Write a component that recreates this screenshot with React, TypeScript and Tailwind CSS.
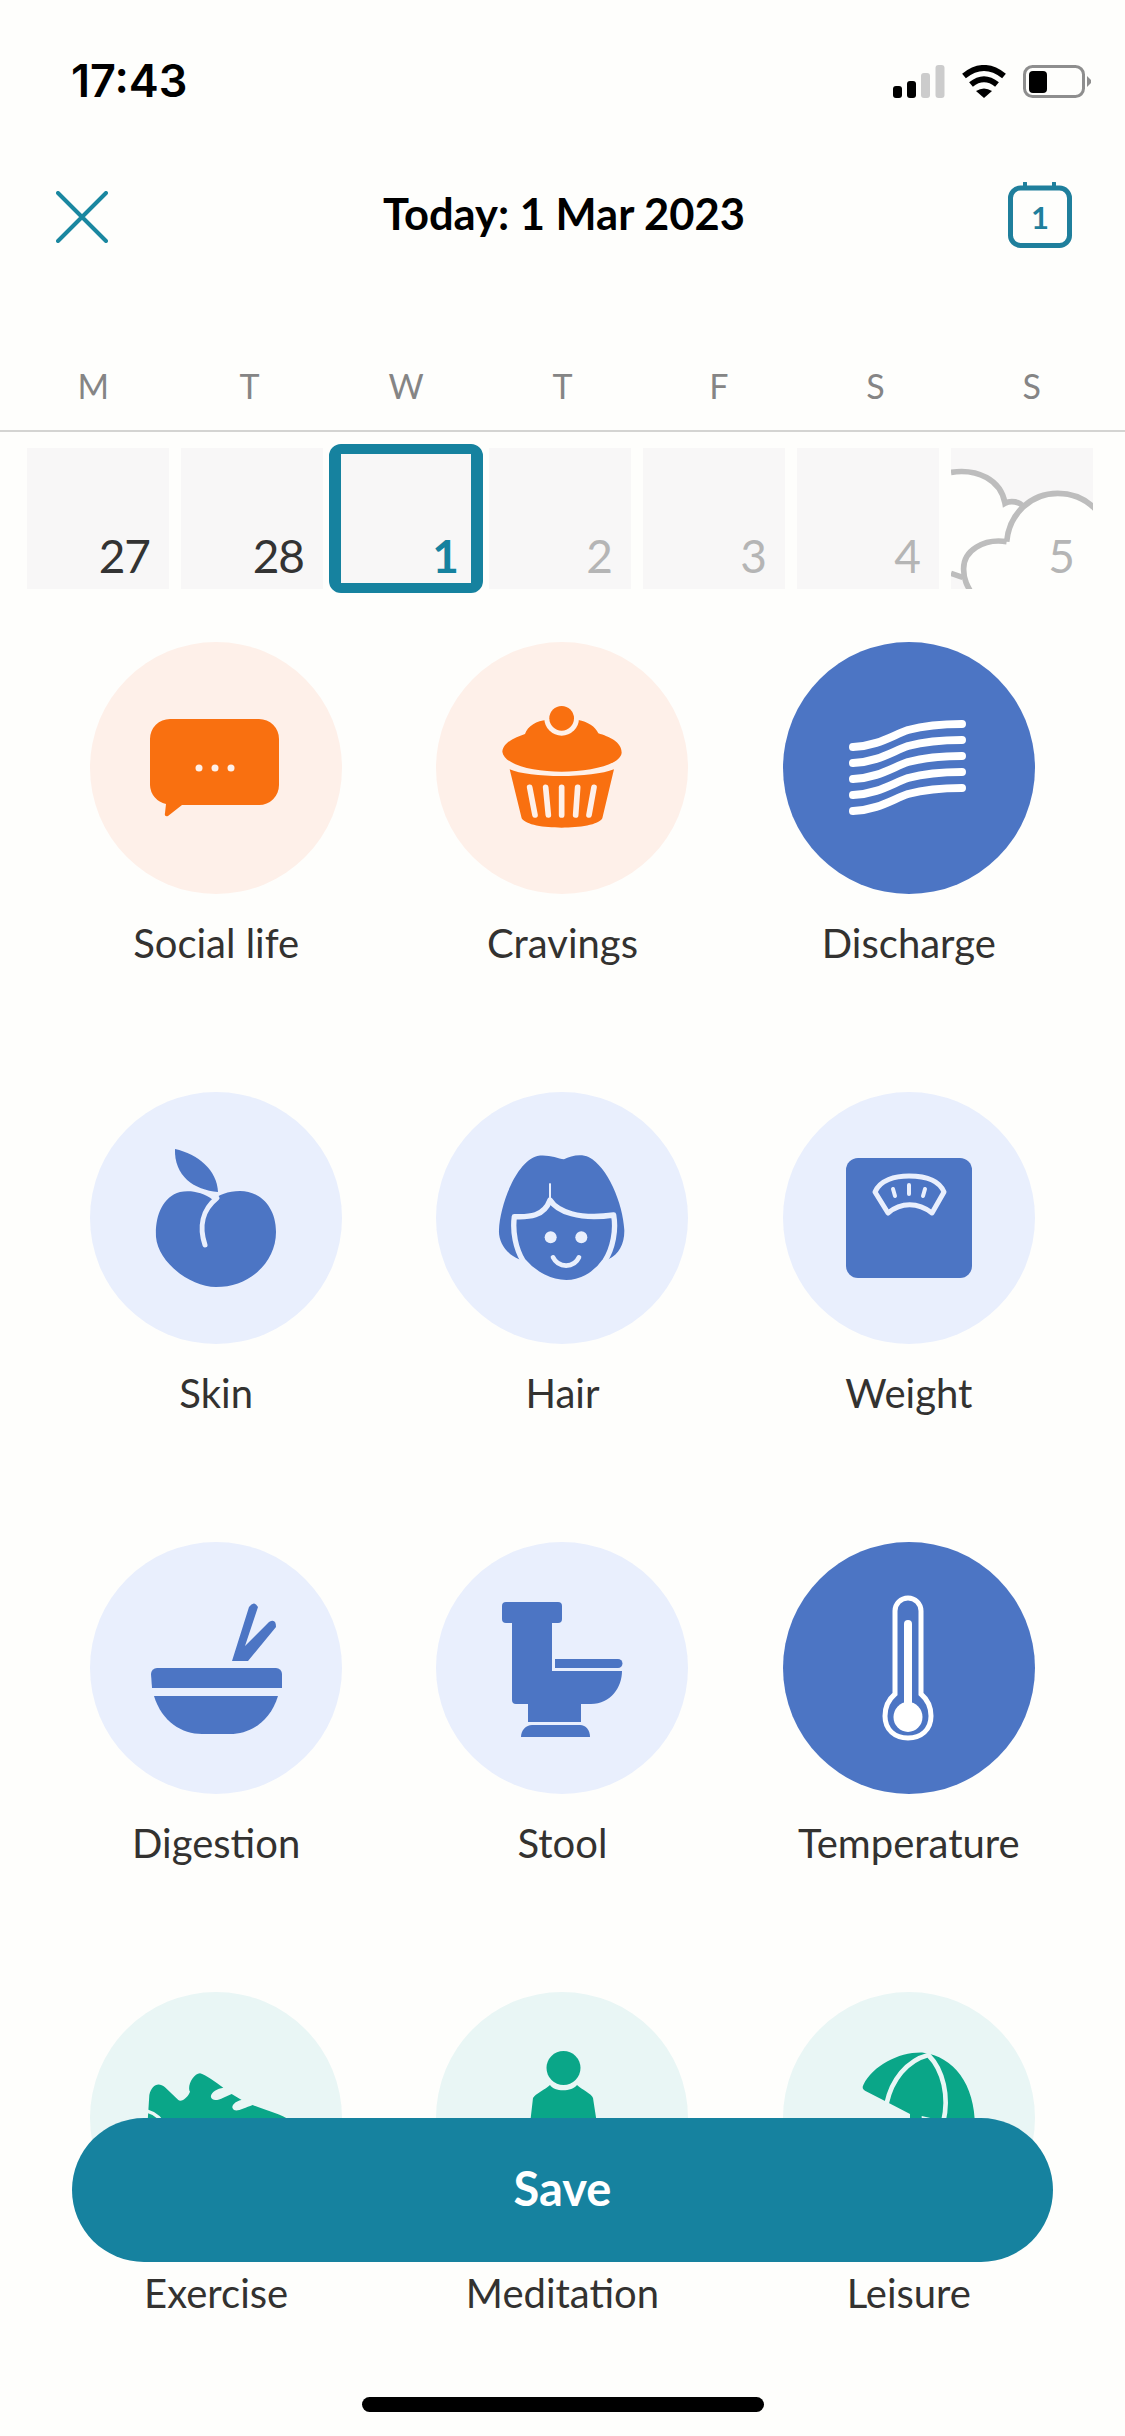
import type { ReactNode } from "react";

const ORANGE = "#f97010";
const PEACH = "#fef0e9";
const BLUE = "#4c75c4";
const SKY = "#e9effd";
const GREEN = "#0aa688";
const MINT = "#e9f6f5";

function Art({ children }: { children: ReactNode }) {
  return (
    <svg width="252" height="252" viewBox="0 0 252 252" className="block">
      {children}
    </svg>
  );
}

function SocialIcon() {
  return (
    <Art>
      <path d="M80 77h89a20 20 0 0 1 20 20v46a20 20 0 0 1-20 20H92l-14 11q-4 1-3-3l1-9a20 20 0 0 1-16-19V97a20 20 0 0 1 20-20z" fill={ORANGE} />
      <circle cx="109" cy="126" r="3.500" fill={PEACH} />
      <circle cx="125" cy="126" r="3.500" fill={PEACH} />
      <circle cx="141" cy="126" r="3.500" fill={PEACH} />
    </Art>
  );
}

function CupcakeIcon() {
  return (
    <Art>
      <g transform="translate(53 48) scale(0.3333)">
        <path d="M40 185C42 155 85 140 108 132C115 108 145 92 172 90L268 90C295 95 320 110 328 130C360 140 398 155 398 188C395 225 300 245 218 245C135 245 45 225 40 185Z" fill={ORANGE} />
        <path d="M62 238C120 265 310 265 375 238L340 385C330 405 270 413 218 413C165 413 110 405 98 385Z" fill={ORANGE} />
        <circle cx="218" cy="85" r="52" fill={PEACH} />
        <circle cx="218" cy="85" r="37" fill={ORANGE} />
        <g stroke={PEACH} strokeWidth="17" strokeLinecap="round">
          <path d="M122 292L138 375" />
          <path d="M170 292L178 375" />
          <path d="M218 292L218 375" />
          <path d="M266 292L260 375" />
          <path d="M315 292L300 375" />
        </g>
      </g>
    </Art>
  );
}

function DischargeIcon() {
  return (
    <Art>
      <g fill="none" stroke="#fff" strokeWidth="8" strokeLinecap="round">
        {[0, 16, 32, 48, 64].map((y) => (
          <path key={y} d={`M70 ${105 + y}C95 ${104 + y} 110 ${93 + y} 125 ${88 + y}C140 ${84 + y} 160 ${82 + y} 179 ${82 + y}`} />
        ))}
      </g>
    </Art>
  );
}

function SkinIcon() {
  return (
    <Art>
      <path d="M85 57C108 62 127 78 128 100C104 98 84 84 85 57Z" fill={BLUE} />
      <path d="M123 108C113 100 100 98 90 100C72 105 65 125 66 145C68 170 100 195 126 195C160 195 186 170 186 140C186 115 170 99 150 99C138 99 128 103 123 108Z" fill={BLUE} />
      <path d="M127 106C112 118 109 135 115 153" fill="none" stroke={SKY} strokeWidth="5" strokeLinecap="round" />
    </Art>
  );
}

function HairIcon() {
  return (
    <Art>
      <g transform="translate(43 28) scale(0.3333)">
        <path d="M60 330C62 260 110 125 175 108C205 102 235 115 255 118C275 108 305 100 330 112C385 140 432 250 436 330C437 370 420 405 388 418L120 418C80 400 58 365 60 330Z" fill={BLUE} />
        <path d="M106 290C150 292 195 290 213 240C235 275 300 300 404 285C412 330 402 385 378 422C345 470 300 488 262 488C215 488 165 462 132 422C110 385 100 335 106 290Z" fill={BLUE} stroke={SKY} strokeWidth="16" strokeLinejoin="round" />
        <path d="M213 190L213 240" stroke={SKY} strokeWidth="6" />
        <circle cx="215" cy="352" r="18" fill={SKY} />
        <circle cx="307" cy="352" r="18" fill={SKY} />
        <path d="M222 412C238 445 285 445 300 412" fill="none" stroke={SKY} strokeWidth="14" strokeLinecap="round" />
      </g>
    </Art>
  );
}

function WeightIcon() {
  return (
    <Art>
      <rect x="63" y="66" width="126" height="120" rx="12" fill={BLUE} />
      <path d="M92 100C97 88 112 84 126 84C141 84 156 88 161 100L149 121C135 110 118 110 105 121Z" fill="none" stroke={SKY} strokeWidth="5" strokeLinejoin="round" />
      <g stroke={SKY} strokeWidth="4" strokeLinecap="round">
        <path d="M110 97L112 104" />
        <path d="M126 93L126 102" />
        <path d="M142 97L140 104" />
      </g>
    </Art>
  );
}

function DigestionIcon() {
  return (
    <Art>
      <path d="M67 126H186a6 6 0 0 1 6 6V146H62L61 132a6 6 0 0 1 6-6Z" fill={BLUE} />
      <path d="M64 154H188C180 180 160 192 140 192H112C92 192 72 180 64 154Z" fill={BLUE} />
      <path d="M142 119L159 65Q164 58 168 65L155 104L179 80Q186 76 186 85L158 119Z" fill={BLUE} />
    </Art>
  );
}

function StoolIcon() {
  return (
    <Art>
      <rect x="66" y="60" width="60" height="21" rx="4" fill={BLUE} />
      <path d="M76 81H116V129H186C186 145 175 162 155 162H145V180H92V162H80a4 4 0 0 1-4-4Z" fill={BLUE} />
      <path d="M119 117H182a4.500 4.500 0 0 1 0 9H119Z" fill={BLUE} />
      <path d="M85 195C85 188 90 183 96 183H144C150 183 154 188 154 195Z" fill={BLUE} />
    </Art>
  );
}

function ThermometerIcon() {
  return (
    <Art>
      <path d="M112 152V69a13 13 0 0 1 26 0V152C145 158 148 166 148 174C148 188 138 196 125 196C112 196 102 188 102 174C102 166 105 158 112 152Z" fill="none" stroke="#fff" strokeWidth="5" />
      <path d="M125 82V165" stroke="#fff" strokeWidth="8" strokeLinecap="round" />
      <ellipse cx="125" cy="175" rx="14.500" ry="15" fill="#fff" />
    </Art>
  );
}

function ShoeIcon() {
  return (
    <Art>
      <g transform="translate(40 58) scale(0.3333)">
        <path d="M50 260L58 135C65 105 85 95 105 112L145 150C155 158 175 140 180 125C170 110 190 70 210 70C225 72 260 100 280 113C262 115 240 128 243 142C248 155 265 150 280 143L305 132L335 150C320 152 303 165 308 175C315 190 340 175 368 165C400 178 440 188 470 205L470 260Z" fill={GREEN} />
        <path d="M48 182C75 190 95 205 105 232" fill="none" stroke={MINT} strokeWidth="10" />
      </g>
    </Art>
  );
}

function MeditationIcon() {
  return (
    <Art>
      <circle cx="127.500" cy="76" r="17" fill={GREEN} />
      <path d="M94 132L97 106C99 102 110 97 114 93C118 100 136 100 141 93C145 97 156 102 157 106L161 132Z" fill={GREEN} />
    </Art>
  );
}

function LeisureIcon() {
  return (
    <Art>
      <g transform="translate(57 48) scale(0.3333)">
        <path d="M70 135C100 75 180 35 250 38C340 50 405 130 405 260H210V222L135 183L75 152C68 148 66 142 70 135Z" fill={GREEN} />
        <path d="M245 228L320 245V270H245Z" fill={MINT} />
        <path d="M140 190C155 120 200 62 265 45C310 90 328 170 310 245" fill="none" stroke={MINT} strokeWidth="14" />
      </g>
    </Art>
  );
}

function SignalIcon() {
  return (
    <svg width="52" height="33" viewBox="0 0 52 33">
      <rect x="0" y="21" width="9" height="12" rx="3" fill="#000" />
      <rect x="14" y="16" width="9" height="17" rx="3" fill="#000" />
      <rect x="28" y="8" width="9" height="25" rx="3" fill="#cccccc" />
      <rect x="42.500" y="0" width="9" height="33" rx="3" fill="#cccccc" />
    </svg>
  );
}

function WifiIcon() {
  return (
    <svg width="46" height="33" viewBox="0 0 46 33">
      <path d="M3 11Q23 -5 43 11" fill="none" stroke="#000" strokeWidth="6" />
      <path d="M10 19.500Q23 9 36 19.500" fill="none" stroke="#000" strokeWidth="6" />
      <path d="M15 26Q23 21 31 26L23 33Z" fill="#000" />
    </svg>
  );
}

function BatteryIcon() {
  return (
    <svg width="68" height="33" viewBox="0 0 68 33">
      <rect x="1.500" y="1.500" width="59" height="30" rx="8" fill="none" stroke="#8e8e8e" strokeWidth="3" />
      <rect x="6" y="6" width="18" height="22" rx="4" fill="#000" />
      <path d="M64 11L68 15V18L64 22Z" fill="#8e8e8e" />
    </svg>
  );
}

function CloudArt() {
  return (
    <svg width="142" height="141" viewBox="0 0 142 141" className="absolute inset-0">
      <g transform="translate(-10 -8) scale(0.3333)">
        <path d="M30 95C110 80 180 120 192 190C210 180 235 185 248 200C270 170 310 160 350 160C400 160 440 180 470 215V460H30Z" fill="#fefefc" />
        <path d="M30 400L65 412C70 430 80 445 90 460H30Z" fill="#f8f7f7" />
        <g fill="none" stroke="#bdbdbd" strokeWidth="17">
          <path d="M30 97C110 85 180 120 192 190C210 180 235 185 248 200" />
          <path d="M197 305C205 220 270 160 350 160C400 160 440 180 470 215" />
          <path d="M197 305C130 295 65 330 68 390C68 420 80 440 92 460" />
          <path d="M30 400L65 412" />
        </g>
      </g>
    </svg>
  );
}

const WEEK_DAYS = ["M", "T", "W", "T", "F", "S", "S"];

const DATES = [
  { day: "27", tone: "text-[#333333]" },
  { day: "28", tone: "text-[#333333]" },
  { day: "1", tone: "text-[#16829f] font-bold", selected: true },
  { day: "2", tone: "text-[#b5b5b5]" },
  { day: "3", tone: "text-[#b5b5b5]" },
  { day: "4", tone: "text-[#b5b5b5]" },
  { day: "5", tone: "text-[#b5b5b5]", cloud: true },
];

const TRACKERS = [
  { label: "Social life", circle: "bg-[#fef0e9]", icon: <SocialIcon /> },
  { label: "Cravings", circle: "bg-[#fef0e9]", icon: <CupcakeIcon /> },
  { label: "Discharge", circle: "bg-[#4c75c4]", icon: <DischargeIcon /> },
  { label: "Skin", circle: "bg-[#e9effd]", icon: <SkinIcon /> },
  { label: "Hair", circle: "bg-[#e9effd]", icon: <HairIcon /> },
  { label: "Weight", circle: "bg-[#e9effd]", icon: <WeightIcon /> },
  { label: "Digestion", circle: "bg-[#e9effd]", icon: <DigestionIcon /> },
  { label: "Stool", circle: "bg-[#e9effd]", icon: <StoolIcon /> },
  { label: "Temperature", circle: "bg-[#4c75c4]", icon: <ThermometerIcon /> },
  { label: "Exercise", circle: "bg-[#e9f6f5]", icon: <ShoeIcon /> },
  { label: "Meditation", circle: "bg-[#e9f6f5]", icon: <MeditationIcon /> },
  { label: "Leisure", circle: "bg-[#e9f6f5]", icon: <LeisureIcon /> },
];

export default function App() {
  return (
    <div className="relative h-[2436px] w-[1125px] overflow-hidden bg-[#fefefc] font-[Lato,sans-serif]">
      {/* Status bar */}
      <div className="flex h-[162px] items-center justify-between pl-[71px] pr-[34px]">
        <span className="font-[Inter,sans-serif] text-[45px] font-semibold text-black">17:43</span>
        <div className="flex items-center gap-[16px]">
          <SignalIcon />
          <WifiIcon />
          <BatteryIcon />
        </div>
      </div>

      {/* Header */}
      <div className="grid h-[106px] grid-cols-[1fr_auto_1fr] items-center pl-[56px] pr-[53px]">
        <svg width="52" height="52" viewBox="0 0 52 52" className="mt-[4px]">
          <path d="M2 2L50 50M50 2L2 50" stroke="#1a87a0" strokeWidth="4" strokeLinecap="round" />
        </svg>
        <h1 className="pb-[2px] text-[43.5px] font-bold text-black">Today: 1 Mar 2023</h1>
        <div className="relative flex h-[66px] w-[64px] items-center justify-center justify-self-end">
          <svg width="64" height="66" viewBox="0 0 64 66" className="absolute inset-0">
            <rect x="2.500" y="6" width="59" height="57.500" rx="10" fill="none" stroke="#1f7f9c" strokeWidth="5" />
            <path d="M17 1V6M46 1V6" stroke="#1f7f9c" strokeWidth="4" strokeLinecap="round" />
          </svg>
          <span className="relative mt-[4px] text-[31px] font-bold text-[#1f7f9c]">1</span>
        </div>
      </div>

      {/* Week days */}
      <div className="grid h-[164px] grid-cols-7 border-b-2 border-[#d4d4d2] px-[15px] pt-[94px]">
        {WEEK_DAYS.map((d, i) => (
          <span key={i} className="text-center text-[34px] leading-[48px] text-[#858585]">
            {d}
          </span>
        ))}
      </div>

      {/* Dates */}
      <div className="mt-[16px] flex gap-[12px] pl-[27px]">
        {DATES.map((d) => (
          <div
            key={d.day}
            className="relative flex h-[141px] w-[142px] items-end justify-end bg-[#f8f7f7] pb-[5px] pr-[19px]"
          >
            {d.cloud && <CloudArt />}
            {d.selected && (
              <div className="absolute -inset-x-[6px] -inset-y-[4px] rounded-[12px] border-x-[12px] border-y-[10px] border-[#16829f]" />
            )}
            <span className={`relative text-[46px] leading-[56px] tracking-[-1px] ${d.tone}`}>{d.day}</span>
          </div>
        ))}
      </div>

      {/* Trackers */}
      <div className="mt-[53px] grid grid-cols-3 px-[43px]">
        {TRACKERS.map((t) => (
          <div key={t.label} className="flex h-[450px] flex-col items-center">
            <div className={`h-[252px] w-[252px] rounded-full ${t.circle}`}>{t.icon}</div>
            <span className="mt-[25px] text-[40px] leading-[48px] text-[#333230]">{t.label}</span>
          </div>
        ))}
      </div>

      {/* Save button and home indicator */}
      <div className="absolute inset-x-0 bottom-[24px] flex flex-col items-center">
        <button className="h-[144px] w-[981px] rounded-full bg-[#16829f] pb-[4px] text-[47px] font-bold text-white">
          Save
        </button>
        <div className="mt-[135px] h-[15px] w-[402px] rounded-full bg-black" />
      </div>
    </div>
  );
}
